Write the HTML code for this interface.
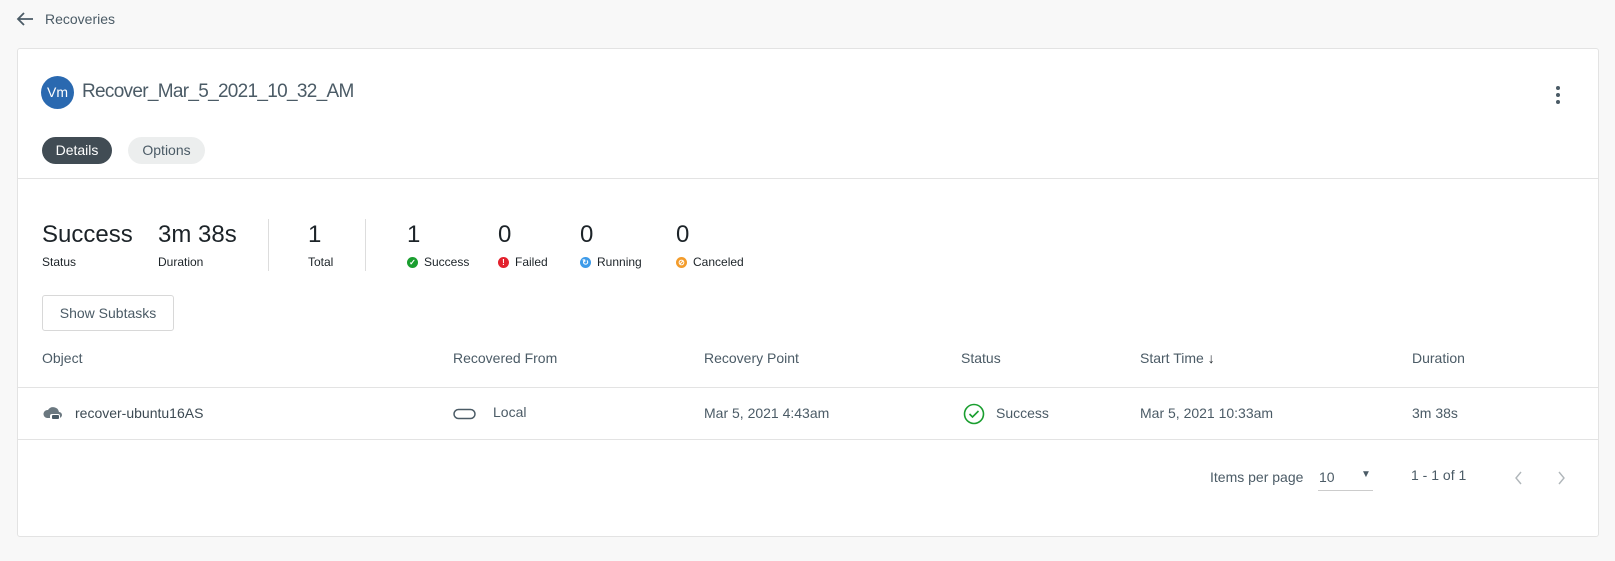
<!DOCTYPE html>
<html><head><meta charset="utf-8"><style>
*{box-sizing:border-box;margin:0;padding:0}
body{width:1615px;height:561px;background:#f8f8f8;font-family:"Liberation Sans",sans-serif;color:#4b5b66;position:relative;overflow:hidden}
.a{position:absolute;white-space:nowrap}
.card{position:absolute;left:17px;top:48px;width:1582px;height:489px;background:#fff;border:1px solid #e3e3e3;border-radius:3px}
.big{font-size:24px;color:#1c2328}
.lbl{font-size:12px;color:#1c2328}
.th{font-size:14px;color:#4b5b66}
.td{font-size:14px;color:#4b5b66}
.vd{position:absolute;width:1px;background:#ddd}
.hd{position:absolute;left:0;width:1580px;height:1px;background:#e3e3e3}
.ic{position:absolute;left:0;top:2px;width:11px;height:11px;border-radius:50%;color:#fff;font-size:8px;line-height:11px;text-align:center;font-weight:bold}
.lbl.s{padding-left:17px}
</style></head><body>
<svg class="a" style="left:16px;top:11px" width="18" height="16" viewBox="0 0 18 16"><path d="M8 2L2 8l6 6M2 8h15" stroke="#4b5b66" stroke-width="1.8" fill="none"/></svg>
<div class="a" style="left:45px;top:11px;font-size:14px">Recoveries</div>
<div class="card">
 <div class="a" style="left:23px;top:27px;width:33px;height:33px;border-radius:50%;background:#2a69b0;color:#fff;font-size:14px;text-align:center;line-height:33px">Vm</div>
 <div class="a" style="left:64px;top:32px;font-size:19px;letter-spacing:-0.7px;color:#4b5b66">Recover_Mar_5_2021_10_32_AM</div>
 <svg class="a" style="left:1537px;top:36px" width="6" height="20"><circle cx="3" cy="3" r="2" fill="#4b5b66"/><circle cx="3" cy="10" r="2" fill="#4b5b66"/><circle cx="3" cy="17" r="2" fill="#4b5b66"/></svg>
 <div class="a" style="left:24px;top:88px;width:70px;height:27px;border-radius:14px;background:#414c54;color:#fff;font-size:14px;text-align:center;line-height:27px">Details</div>
 <div class="a" style="left:110px;top:88px;width:77px;height:27px;border-radius:14px;background:#eceeee;color:#4b5b66;font-size:14px;text-align:center;line-height:27px">Options</div>
 <div class="hd" style="top:129px"></div>
 <div class="a big" style="left:24px;top:172px">Success</div><div class="a lbl" style="left:24px;top:206px">Status</div>
 <div class="a big" style="left:140px;top:172px">3m 38s</div><div class="a lbl" style="left:140px;top:206px">Duration</div>
 <div class="vd" style="left:250px;top:170px;height:52px"></div>
 <div class="a big" style="left:290px;top:172px">1</div><div class="a lbl" style="left:290px;top:206px">Total</div>
 <div class="vd" style="left:347px;top:170px;height:52px"></div>
 <div class="a big" style="left:389px;top:172px">1</div><div class="a lbl s" style="left:389px;top:206px"><span class="ic" style="background:#1a9e2f">✓</span>Success</div>
 <div class="a big" style="left:480px;top:172px">0</div><div class="a lbl s" style="left:480px;top:206px"><span class="ic" style="background:#e3212d">!</span>Failed</div>
 <div class="a big" style="left:562px;top:172px">0</div><div class="a lbl s" style="left:562px;top:206px"><span class="ic" style="background:#3e9be9">↻</span>Running</div>
 <div class="a big" style="left:658px;top:172px">0</div><div class="a lbl s" style="left:658px;top:206px"><span class="ic" style="background:#f39c2b">⊘</span>Canceled</div>
 <div class="a" style="left:24px;top:246px;width:132px;height:36px;border:1px solid #d8d8d8;border-radius:3px;font-size:14px;text-align:center;line-height:34px">Show Subtasks</div>
 <div class="a th" style="left:24px;top:301px">Object</div>
 <div class="a th" style="left:435px;top:301px">Recovered From</div>
 <div class="a th" style="left:686px;top:301px">Recovery Point</div>
 <div class="a th" style="left:943px;top:301px">Status</div>
 <div class="a th" style="left:1122px;top:301px">Start Time <span style="color:#1c2328">↓</span></div>
 <div class="a th" style="left:1394px;top:301px">Duration</div>
 <div class="hd" style="top:338px"></div>
 <svg class="a" style="left:24px;top:357px" width="22" height="16" viewBox="0 0 22 16"><path d="M5 12a4 4 0 0 1 1-8 6 6 0 0 1 11 2 3 3 0 0 1 0 6z" fill="#6b7880"/><rect x="8" y="8" width="10" height="6" rx="2" fill="#fff"/><rect x="10" y="9" width="7" height="4" rx="1" fill="#4b5b66"/></svg>
 <div class="a td" style="left:57px;top:356px;color:#3d4a53">recover-ubuntu16AS</div>
 <svg class="a" style="left:435px;top:359px" width="24" height="12"><rect x="1" y="1.5" width="21" height="9" rx="4.5" fill="none" stroke="#4b5b66" stroke-width="1.5"/></svg>
 <div class="a td" style="left:475px;top:355px">Local</div>
 <div class="a td" style="left:686px;top:356px">Mar 5, 2021 4:43am</div>
 <svg class="a" style="left:945px;top:354px" width="22" height="22"><circle cx="11" cy="11" r="9.5" fill="none" stroke="#1a9e2f" stroke-width="1.6"/><path d="M6.5 11l3 3 6-6" fill="none" stroke="#1a9e2f" stroke-width="1.6"/></svg>
 <div class="a td" style="left:978px;top:356px">Success</div>
 <div class="a td" style="left:1122px;top:356px">Mar 5, 2021 10:33am</div>
 <div class="a td" style="left:1394px;top:356px">3m 38s</div>
 <div class="hd" style="top:390px"></div>
 <div class="a td" style="left:1192px;top:420px">Items per page</div>
 <div class="a td" style="left:1301px;top:420px">10</div>
 <div class="a" style="left:1343px;top:420px;font-size:10px">▼</div>
 <div class="a" style="left:1300px;top:441px;width:55px;height:1px;background:#ccc"></div>
 <div class="a td" style="left:1393px;top:418px">1 - 1 of 1</div>
 <svg class="a" style="left:1497px;top:422px" width="50" height="14"><path d="M6 1L1 7l5 6M44 1l5 6-5 6" fill="none" stroke="#b0b6ba" stroke-width="1.4"/></svg>
</div>
</body></html>
